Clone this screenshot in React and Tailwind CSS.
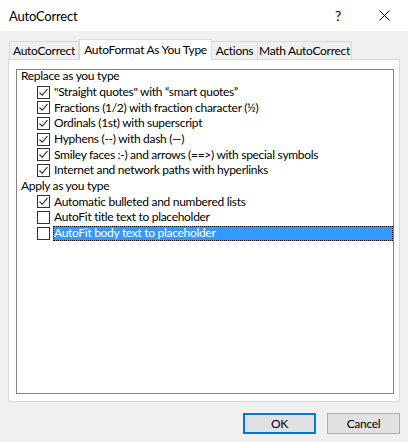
import React from 'react';

const replaceItems = [
  { label: '"Straight quotes" with “smart quotes”', checked: true },
  { label: 'Fractions (1/2) with fraction character (½)', checked: true },
  { label: 'Ordinals (1st) with superscript', checked: true },
  { label: 'Hyphens (--) with dash (—)', checked: true },
  { label: 'Smiley faces :-) and arrows (==>) with special symbols', checked: true },
  { label: 'Internet and network paths with hyperlinks', checked: true },
];

const applyItems = [
  { label: 'Automatic bulleted and numbered lists', checked: true },
  { label: 'AutoFit title text to placeholder', checked: false },
  { label: 'AutoFit body text to placeholder', checked: false, selected: true },
];

function CheckBox({ checked }) {
  return (
    <span className="w-[13px] h-[13px] border border-[#333333] bg-white flex items-center justify-center shrink-0">
      {checked && (
        <svg width="11" height="11" viewBox="0 0 11 11">
          <path d="M1.5 5.5 L4.2 8.2 L9.5 2.2" fill="none" stroke="#333333" strokeWidth="1.1" />
        </svg>
      )}
    </span>
  );
}

function Row({ label, checked, selected }) {
  return (
    <div className="flex items-center h-[15.6px] pl-[20px]">
      <CheckBox checked={checked} />
      <div className="flex-1 ml-[3px] h-[15.6px] flex items-center">
        <span
          className={
            selected
              ? 'flex-1 h-[15px] flex items-center pl-px bg-[#3399ff] text-white outline outline-1 outline-dotted outline-black -outline-offset-1'
              : 'pl-px'
          }
        >
          {label}
        </span>
      </div>
    </div>
  );
}

export default function App() {
  return (
    <div
      className="w-[408px] h-[442px] flex flex-col bg-[#f0f0f0] text-[12px] leading-4 tracking-[-0.3px] text-black"
      style={{ fontFamily: 'Lato, "Noto Sans", sans-serif' }}
    >
      {/* title bar */}
      <div className="h-[31px] bg-white flex items-center pl-[9px] pr-[18px] shrink-0">
        <span className="text-[13px] flex-1 tracking-[-0.2px]">AutoCorrect</span>
        <span className="text-[14px] mr-[38px]">?</span>
        <svg width="11" height="11" viewBox="0 0 11 11">
          <path d="M0.5 0.5 L10.5 10.5 M10.5 0.5 L0.5 10.5" stroke="#000" strokeWidth="1" />
        </svg>
      </div>

      {/* tabs */}
      <div className="flex items-end pl-[9px] pt-[7px] h-[28px] shrink-0 whitespace-nowrap">
        <div className="w-[70px] h-[18px] border border-b-0 border-[#d9d9d9] bg-[#f0f0f0] flex items-center justify-center">
          AutoCorrect
        </div>
        <div className="w-[133px] h-[21px] border border-b-0 border-[#d9d9d9] bg-white flex items-start pt-[2px] justify-center -mb-px relative z-10">
          AutoFormat As You Type
        </div>
        <div className="w-[46px] h-[18px] border border-b-0 border-l-0 border-[#d9d9d9] flex items-center justify-center">
          Actions
        </div>
        <div className="w-[94px] h-[18px] border border-b-0 border-l-0 border-[#d9d9d9] flex items-center justify-center">
          Math AutoCorrect
        </div>
      </div>

      {/* tab panel */}
      <div className="mx-[8px] h-[343px] border border-[#d9d9d9] bg-white pt-[9px] pl-[7px] pr-[5px] pb-[7px] flex shrink-0">
        <div className="flex-1 border border-[#828282] flex flex-col whitespace-nowrap">
          <div className="h-4 flex items-center pl-[4px] -mt-[2px] mb-[0.5px]">Replace as you type</div>
          {replaceItems.map((item) => (
            <Row key={item.label} {...item} />
          ))}
          <div className="h-[16px] flex items-center pl-[4px]">Apply as you type</div>
          {applyItems.map((item) => (
            <Row key={item.label} {...item} />
          ))}
        </div>
      </div>

      {/* buttons */}
      <div className="flex justify-end pr-[8px] pt-[11px] gap-[11px]">
        <button className="w-[73px] h-[21px] bg-[#e1e1e1] border-2 border-[#0078d7] flex items-center justify-center">
          OK
        </button>
        <button className="w-[73px] h-[21px] bg-[#e1e1e1] border border-[#adadad] flex items-center justify-center">
          Cancel
        </button>
      </div>
    </div>
  );
}
